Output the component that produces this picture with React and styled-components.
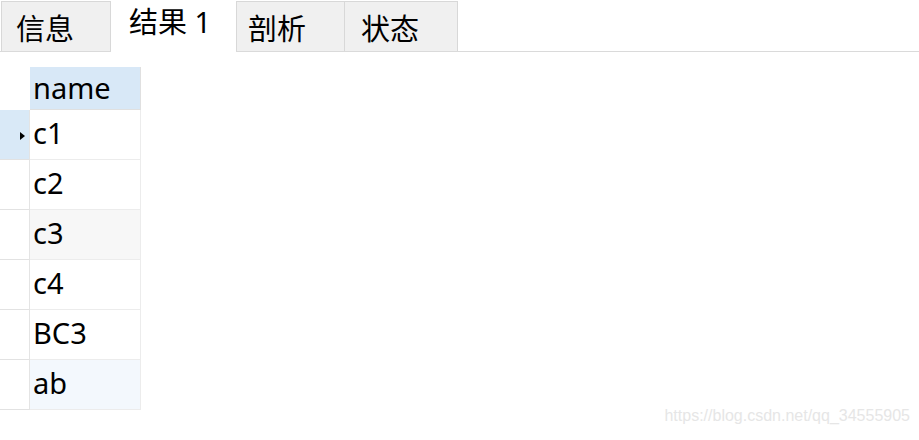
import React from "react";
import styled, { createGlobalStyle } from "styled-components";

const GlobalStyle = createGlobalStyle`
  html, body {
    margin: 0;
    padding: 0;
    background: #ffffff;
  }
  body {
    font-family: "Noto Sans", "Noto Sans CJK SC", sans-serif;
    color: #000000;
  }
`;

const Page = styled.div`
  position: relative;
  width: 919px;
  height: 440px;
  overflow: hidden;
`;

const TabBar = styled.div`
  display: flex;
  align-items: flex-end;
  height: 51px;
  padding-left: 1px;
  border-bottom: 1px solid #dadada;
`;

const Tab = styled.div`
  box-sizing: border-box;
  width: ${(p) => p.$width}px;
  height: ${(p) => (p.$active ? 52 : 50)}px;
  margin-bottom: ${(p) => (p.$active ? -1 : 0)}px;
  padding-left: ${(p) => p.$indent}px;
  padding-top: ${(p) => (p.$active ? 4 : 9)}px;
  background: ${(p) => (p.$active ? "#ffffff" : "#f0f0f0")};
  border: ${(p) => (p.$active ? "none" : "1px solid #d8d8d8")};
  border-bottom: none;
  border-left: ${(p) => (p.$joined ? "none" : undefined)};
  font-family: "Noto Sans", "Noto Sans CJK SC", sans-serif;
  font-size: 29px;
  line-height: 36px;
  white-space: nowrap;
`;

const Grid = styled.div`
  display: grid;
  grid-template-columns: 30px 111px;
  margin-top: 15px;
  width: 141px;
`;

const Indicator = styled.div`
  box-sizing: border-box;
  height: ${(p) => (p.$header ? 43 : 50)}px;
  border-right: 1px solid #e4e4e4;
  border-bottom: ${(p) => (p.$header ? "none" : "1px solid #e2e2e2")};
  background: ${(p) => (p.$selected ? "#d9e9f7" : "#ffffff")};
  border-right-color: ${(p) => (p.$header ? "transparent" : "#e4e4e4")};
  display: flex;
  align-items: center;
  justify-content: flex-end;
  padding-right: 4px;
`;

const Arrow = styled.span`
  width: 0;
  height: 0;
  border-top: 4.5px solid transparent;
  border-bottom: 4.5px solid transparent;
  border-left: 5px solid #000000;
  margin-top: 2px;
`;

const HeaderCell = styled.div`
  box-sizing: border-box;
  height: 43px;
  padding-left: 3px;
  background: #d8e8f7;
  border-right: 1px solid #e0e0e0;
  border-bottom: 1px solid #e0e0e0;
  font-size: 29px;
  line-height: 42px;
`;

const Cell = styled.div`
  box-sizing: border-box;
  height: 50px;
  padding-left: 3px;
  background: ${(p) => p.$bg};
  border-right: 1px solid #ececec;
  border-bottom: 1px solid #ececec;
  font-size: 29px;
  line-height: 46px;
`;

const Watermark = styled.div`
  position: absolute;
  right: 9px;
  top: 407px;
  font-family: "Liberation Sans", Arial, sans-serif;
  font-size: 16px;
  color: #e6e6e6;
`;

const tabs = [
  { label: "信息", width: 110, indent: 14 },
  { label: "结果 1", width: 125, indent: 18, active: true },
  { label: "剖析", width: 109, indent: 11 },
  { label: "状态", width: 113, indent: 16, joined: true },
];

const rows = [
  { name: "c1", bg: "#ffffff", selected: true },
  { name: "c2", bg: "#ffffff" },
  { name: "c3", bg: "#f7f7f7" },
  { name: "c4", bg: "#ffffff" },
  { name: "BC3", bg: "#ffffff" },
  { name: "ab", bg: "#f3f8fd" },
];

export default function App() {
  return (
    <Page>
      <GlobalStyle />
      <TabBar>
        {tabs.map((t) => (
          <Tab
            key={t.label}
            $width={t.width}
            $indent={t.indent}
            $active={t.active}
            $joined={t.joined}
          >
            {t.label}
          </Tab>
        ))}
      </TabBar>

      <Grid>
        <Indicator $header />
        <HeaderCell>name</HeaderCell>
        {rows.map((r) => (
          <React.Fragment key={r.name}>
            <Indicator $selected={r.selected}>
              {r.selected && <Arrow />}
            </Indicator>
            <Cell $bg={r.bg}>{r.name}</Cell>
          </React.Fragment>
        ))}
      </Grid>

      <Watermark>https://blog.csdn.net/qq_34555905</Watermark>
    </Page>
  );
}
